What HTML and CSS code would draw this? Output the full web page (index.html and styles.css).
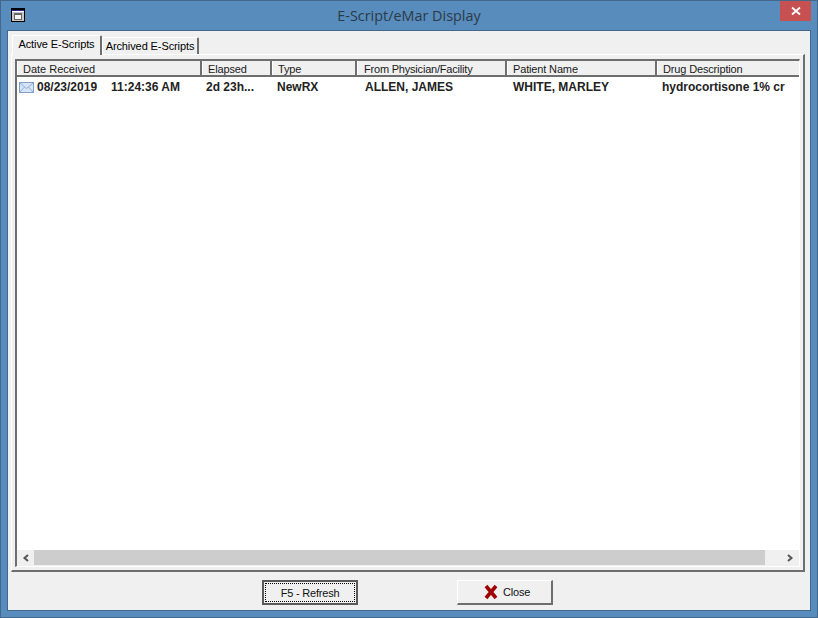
FILE: index.html
```html
<!DOCTYPE html>
<html lang="en">
<head>
<meta charset="utf-8">
<title>E-Script/eMar Display</title>
<link rel="stylesheet" href="styles.css">
</head>
<body>
<div class="window">
  <div class="titlebar">
    <svg class="app-icon" width="14" height="14" viewBox="0 0 14 14" shape-rendering="crispEdges">
      <rect width="14" height="14" fill="#000"/>
      <rect x="1" y="1" width="12" height="12" fill="#c8c8c8"/>
      <rect x="1" y="1" width="12" height="1" fill="#000"/>
      <rect x="1" y="2" width="12" height="1" fill="#2a2a90"/>
      <rect x="1" y="3" width="12" height="1" fill="#fff"/>
      <rect x="3" y="5" width="8" height="7" fill="#666"/>
      <rect x="4" y="7" width="6" height="4" fill="#f4f4f4"/>
    </svg>
    <div class="title">E-Script/eMar Display</div>
    <div class="close-x">
      <svg width="10" height="10" viewBox="0 0 10 10"><path d="M1 1.5 9 8.5M9 1.5 1 8.5" stroke="#fff" stroke-width="1.8" fill="none"/></svg>
    </div>
  </div>
  <div class="client">
    <div class="tabs">
      <div class="tab active">Active E-Scripts</div>
      <div class="tab">Archived E-Scripts</div>
    </div>
    <div class="panel">
      <div class="list">
        <div class="cols head">
          <div class="hcell wide">Date Received</div>
          <div class="hcell">Elapsed</div>
          <div class="hcell">Type</div>
          <div class="hcell from">From Physician/Facility</div>
          <div class="hcell">Patient Name</div>
          <div class="hcell">Drug Description</div>
        </div>
        <div class="cols row">
          <div class="cell date">
            <svg class="mail" width="15" height="11" viewBox="0 0 15 11">
              <rect x=".5" y=".5" width="14" height="10" fill="#d6e6f8" stroke="#7f9fc8"/>
              <path d="M1 1 7.5 6.5 14 1M1 10 5.5 5M14 10 9.5 5" fill="none" stroke="#8fb0d8"/>
            </svg>
            <span class="d">08/23/2019</span><span>11:24:36 AM</span>
          </div>
          <div class="cell elapsed">2d 23h...</div>
          <div class="cell">NewRX</div>
          <div class="cell c4">ALLEN, JAMES</div>
          <div class="cell c5">WHITE, MARLEY</div>
          <div class="cell">hydrocortisone 1% cr</div>
        </div>
        <div class="fill"></div>
        <div class="hscroll">
          <div class="arrow">
            <svg width="8" height="8" viewBox="0 0 8 8"><path d="M6 1 2.5 4 6 7" fill="none" stroke="#555" stroke-width="2"/></svg>
          </div>
          <div class="thumb"></div>
          <div class="arrow end">
            <svg width="8" height="8" viewBox="0 0 8 8"><path d="M2 1 5.5 4 2 7" fill="none" stroke="#555" stroke-width="2"/></svg>
          </div>
        </div>
      </div>
    </div>
    <div class="actions">
      <button class="btn default"><span class="focus">F5 - Refresh</span></button>
      <button class="btn close">
        <svg width="14" height="16" viewBox="0 0 14 16"><path d="M2 2 12 14M12 2 2 14" stroke="#a00000" stroke-width="3.6" fill="none"/></svg>
        <span class="close-label">Close</span>
      </button>
    </div>
  </div>
</div>
</body>
</html>
```

FILE: styles.css
```css
* { box-sizing: border-box; }
html, body { margin: 0; padding: 0; }
body {
  width: 818px;
  height: 618px;
  overflow: hidden;
  font-family: "Liberation Sans", Arial, sans-serif;
  font-size: 11px;
  color: #000;
}
.window {
  width: 818px;
  height: 618px;
  display: flex;
  flex-direction: column;
  background: #588cbc;
  border: 1px solid #44688c;
  padding: 0 6px 6px;
}
.titlebar {
  height: 29px;
  flex: none;
  display: flex;
  align-items: flex-start;
  position: relative;
}
.app-icon { margin: 7px 0 0 4px; flex: none; }
.title {
  position: absolute;
  left: 0;
  right: 0;
  top: 5px;
  text-align: center;
  font-family: "Open Sans", sans-serif;
  font-size: 14.4px;
  line-height: 20px;
  color: #2b3a48;
}
.close-x {
  margin-left: auto;
  width: 31px;
  height: 20px;
  background: #c75050;
  display: flex;
  align-items: center;
  justify-content: center;
  position: relative;
}
.client {
  flex: 1;
  display: flex;
  flex-direction: column;
  background: #f0f0f0;
  padding: 4px 5px 0 3px;
  border: 1px solid #44688c;
  min-height: 0;
}
.tabs {
  display: flex;
  align-items: flex-end;
  height: 19px;
  padding-left: 1px;
  flex: none;
  position: relative;
  z-index: 1;
  letter-spacing: -.1px;
}
.tab {
  height: 17px;
  width: 97px;
  padding-top: 1px;
  text-align: center;
  line-height: 14px;
  background: #f0f0f0;
  border-top: 1px solid #fff;
  border-left: 1px solid #fff;
  border-right: 2px solid #6e6e6e;
  border-radius: 2px 2px 0 0;
}
.tab.active {
  height: 20px;
  width: 90px;
  margin-bottom: -1px;
  padding-top: 1px;
}
.panel {
  flex: none;
  height: 518px;
  background: #f0f0f0;
  border-top: 1px solid #fff;
  border-left: 1px solid #fff;
  border-right: 2px solid #6e6e6e;
  border-bottom: 2px solid #6e6e6e;
  padding: 4px 3px 3px 3px;
  display: flex;
}
.list {
  flex: 1;
  min-width: 0;
  display: flex;
  flex-direction: column;
  background: #fff;
  border-top: 2px solid #6e6e6e;
  border-left: 2px solid #6e6e6e;
  border-right: 1px solid #fff;
  border-bottom: 1px solid #fff;
  overflow: hidden;
}
.cols {
  display: grid;
  grid-template-columns: 185px 70px 85px 150px 150px 1fr;
}
.head {
  height: 16px;
  flex: none;
  background: #f0f0f0;
  border-bottom: 2px solid #6e6e6e;
}
.hcell {
  height: 14px;
  padding-left: 5px;
  line-height: 17px;
  white-space: nowrap;
  color: #1a1a1a;
  letter-spacing: -.15px;
  border-right: 2px solid #6e6e6e;
  border-left: 1px solid #fff;
}
.hcell:last-child { border-right: 0; }
.hcell.wide { letter-spacing: 0; }
.hcell.from { padding-left: 6px; letter-spacing: -.2px; }
.row {
  height: 20px;
  font-weight: 700;
  font-size: 12px;
  line-height: 20px;
  color: #222;
}
.cell { padding-left: 5px; white-space: nowrap; }
.elapsed { padding-left: 4px; }
.c4 { padding-left: 8px; }
.c5 { padding-left: 6px; }
.date { padding-left: 2px; display: flex; align-items: center; }
.mail { flex: none; margin-right: 3px; }
.d { margin-right: 14px; }
.fill { flex: 1; }
.hscroll {
  flex: none;
  height: 16px;
  display: flex;
  background: #f0f0f0;
  border-bottom: 1px solid #f0f0f0;
}
.arrow {
  width: 17px;
  flex: none;
  display: flex;
  align-items: center;
  justify-content: center;
}
.arrow.end { width: 34px; justify-content: flex-end; padding-right: 5px; }
.thumb { flex: 1; background: #cdcdcd; }
.actions {
  flex: 1;
  display: flex;
  align-items: flex-start;
  padding: 8px 0 0 251px;
  gap: 99px;
}
.btn {
  width: 96px;
  height: 25px;
  padding: 0;
  margin: 0;
  font: inherit;
  letter-spacing: -.2px;
  color: #111;
  background: #f0f0f0;
  border: 1px solid #fff;
  border-right: 2px solid #6e6e6e;
  border-bottom: 2px solid #6e6e6e;
  display: flex;
  align-items: center;
}
.btn.close { padding-left: 26px; gap: 5px; }
.btn.default { border: 2px solid #5a5a5a; padding: 1px; }
.focus {
  flex: 1;
  align-self: stretch;
  display: flex;
  align-items: center;
  justify-content: center;
  border: 1px dotted #000;
}
```
